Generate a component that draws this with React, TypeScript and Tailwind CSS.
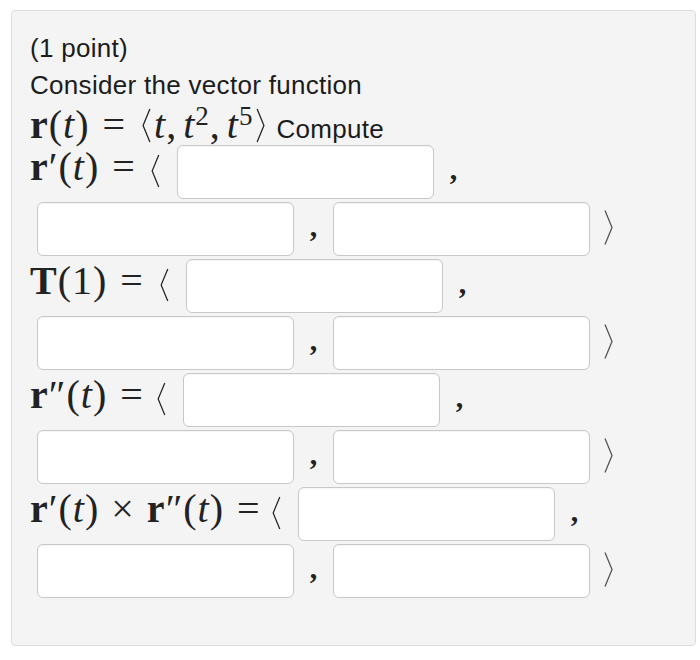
import React from 'react';

const sans = "font-['Liberation_Sans',Arial,sans-serif]";
const serif = "font-['Liberation_Serif','Times_New_Roman',serif]";

function LAngle({ className }: { className?: string }) {
  return (
    <svg viewBox="0 0 12 36" className={className} fill="none" stroke="#222" strokeWidth={1.3} aria-hidden>
      <path d="M10 1 L3 18 L10 35" />
    </svg>
  );
}

function RAngle({ className, color = '#222' }: { className?: string; color?: string }) {
  return (
    <svg viewBox="0 0 12 36" className={className} fill="none" stroke={color} strokeWidth={1.3} aria-hidden>
      <path d="M2 1 L9 18 L2 35" />
    </svg>
  );
}

function Blank() {
  return (
    <input
      type="text"
      className="h-[54px] w-[257px] shrink-0 rounded-[6px] border border-[#c8c8c8] bg-white px-2 outline-none shadow-[inset_0_1px_1px_rgba(0,0,0,0.04)]"
    />
  );
}

function Comma() {
  return (
    <span className={`${serif} mb-[15px] w-[39px] shrink-0 text-center text-[30px] font-bold leading-none text-[#222]`}>,</span>
  );
}

// first line of each answer: label, opening bracket, first blank
function LeadRow({ width, children }: { width: string; children: React.ReactNode }) {
  return (
    <div className="flex h-[54px] items-end">
      <div className={`flex h-full shrink-0 items-end ${width}`}>
        <span className={`${serif} mb-[12px] whitespace-nowrap text-[40px] leading-none tracking-[1px] text-[#222]`}>
          {children}
        </span>
        <LAngle className="mb-[11px] ml-auto mr-[16px] h-[34px] w-[12px]" />
      </div>
      <Blank />
      <Comma />
    </div>
  );
}

// second line: two blanks and the closing bracket
function TailRow() {
  return (
    <div className="flex h-[54px] items-end pl-[7px]">
      <Blank />
      <Comma />
      <Blank />
      <RAngle color="#555" className="mb-[9px] ml-[13px] h-[39px] w-[12px]" />
    </div>
  );
}

export default function App() {
  return (
    <div className="min-h-[660px] bg-white pt-[10px]">
      <div className="ml-[11px] w-[685px] rounded-[4px] border border-[#dddddd] bg-[#f4f4f4] pb-[47px] pl-[18px] pt-[19px] text-[#1c1c1c]">
        <p className={`${sans} text-[26px] leading-[37px] tracking-[0.3px]`}>(1 point)</p>
        <p className={`${sans} text-[26px] leading-[37px] tracking-[0.3px]`}>Consider the vector function</p>

        <div className="flex h-[41px] items-end">
          <span className={`${serif} whitespace-nowrap text-[40px] leading-none tracking-[1px] text-[#222]`}>
            <b className="font-bold">r</b>(<i>t</i>)
            <span className="ml-[13px] mr-[14px]">=</span>
            <LAngle className="inline-block h-[35px] w-[12px] align-[-5px]" />
            <i className="ml-[2px]">t</i>
            <span className="mr-[6px]">,</span>
            <i>t</i>
            <sup className="text-[27px]">2</sup>
            <span className="mr-[6px]">,</span>
            <i>t</i>
            <sup className="text-[27px]">5</sup>
            <RAngle className="ml-[2px] inline-block h-[35px] w-[12px] align-[-5px]" />
          </span>
          <span className={`${sans} mb-[3px] ml-[9px] text-[26px] leading-none tracking-[0.3px]`}>Compute</span>
        </div>

        <div className="flex flex-col gap-[3px]">
          <LeadRow width="w-[147px]">
            <b className="font-bold">r</b>′(<i>t</i>)<span className="ml-[13px]">=</span>
          </LeadRow>
          <TailRow />
          <LeadRow width="w-[156px]">
            <b className="font-bold">T</b>(1)<span className="ml-[13px]">=</span>
          </LeadRow>
          <TailRow />
          <LeadRow width="w-[153px]">
            <b className="font-bold">r</b>″(<i>t</i>)<span className="ml-[13px]">=</span>
          </LeadRow>
          <TailRow />
          <LeadRow width="w-[268px]">
            <b className="font-bold">r</b>′(<i>t</i>)<span className="mx-[12px]">×</span>
            <b className="font-bold">r</b>″(<i>t</i>)<span className="ml-[13px]">=</span>
          </LeadRow>
          <TailRow />
        </div>
      </div>
    </div>
  );
}
